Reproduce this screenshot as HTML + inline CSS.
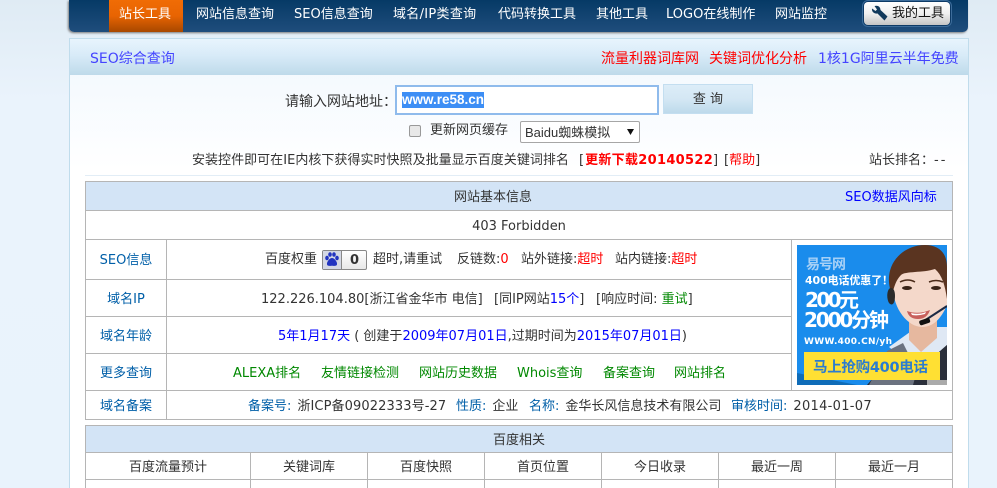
<!DOCTYPE html>
<html><head><meta charset="utf-8"><title>SEO综合查询</title>
<style>
*{box-sizing:border-box}
html,body{margin:0;padding:0;width:997px;height:488px;overflow:hidden}
#w{position:relative;width:997px;height:488px;overflow:hidden;background:linear-gradient(#dfebf4,#eaf3fc 100px,#e9f3fc);font:13px/16px "DejaVu Sans","WenQuanYi Zen Hei","Noto Sans CJK SC",sans-serif;color:#333}
.t{position:absolute;white-space:nowrap}
.c{text-align:center}
.l{position:absolute;background:#b5b5b5}
.b{color:#06c}.d{color:#005fa8}.g{color:#080}.r{color:#f00}.u{color:#00f}
.m{margin-left:3px}
#nav{position:absolute;left:69px;top:0;width:899px;height:32px;background:linear-gradient(#063a66,#1f4d7c);border-radius:0 0 5px 5px;box-shadow:-1px 1px 2px #777}
#nav .t{color:#fff;top:7px}
#on{position:absolute;left:40px;top:0;width:74px;height:32px;background:linear-gradient(#f06c05,#e86402 50%,#a84800)}
#btn{position:absolute;left:795px;top:2px;width:86px;height:23px;border-radius:4px;background:linear-gradient(#fff,#f0f0f0 50%,#c4c4c4);box-shadow:0 0 0 1px #0d3a66,0 0 0 2px #3c6c9a}
#panel{position:absolute;left:69px;top:38px;width:900px;height:460px;border:1px solid #c0dcec;background:linear-gradient(#f0f7fe,#fff 130px)}
#ph{position:absolute;left:0;top:0;width:898px;height:36px;background:linear-gradient(#e8f4fd,#d8ebf8 45%,#bedaea)}
</style></head><body><div id="w">
<div id="nav">
<div id="on"></div>
<span class="t" style="left:50px">站长工具</span>
<span class="t" style="left:127px">网站信息查询</span>
<span class="t" style="left:225px">SEO信息查询</span>
<span class="t" style="left:324px;letter-spacing:.3px">域名/IP类查询</span>
<span class="t" style="left:429px">代码转换工具</span>
<span class="t" style="left:527px">其他工具</span>
<span class="t" style="left:597px">LOGO在线制作</span>
<span class="t" style="left:706px">网站监控</span>
<div id="btn">
<svg style="position:absolute;left:7px;top:3px" width="17" height="16" viewBox="0 0 17 16"><path d="M1 3.500L4.500 6 6 4.500 3.500 1C6.500 0 9.500 1.500 9.500 5L16.500 11.500 13.500 15.500 6.500 8.500C3.500 9 .5 7 1 3.500z" fill="#123a5c"/></svg>
<span class="t" style="left:28px;top:4px;color:#111">我的工具</span>
</div>
</div>
<div id="panel">
<div id="ph"></div>
<span class="t" style="left:20px;top:12px;color:#44f;font-size:14px">SEO综合查询</span>
<span class="t" style="left:531px;top:12px;color:#f00;font-size:14px">流量利器词库网</span>
<span class="t" style="left:639px;top:12px;color:#f00;font-size:14px">关键词优化分析</span>
<span class="t" style="left:748px;top:12px;color:#44f;font-size:14px">1核1G阿里云半年免费</span>
</div>
<span class="t" style="left:285px;top:94px;font-size:14px">请输入网站地址：</span>
<div style="position:absolute;left:395px;top:85px;width:264px;height:30px;border:2px solid #8fbbec;background:#fff"></div>
<span class="t" style="left:402px;top:92px;height:16px;line-height:16px;background:#3d8ef5;color:#fff;font-weight:bold;font-family:'Liberation Sans',sans-serif;font-size:13.500px">www.re58.cn</span>
<div class="t c" style="left:663px;top:84px;width:90px;height:30px;line-height:29px;background:linear-gradient(#dcedf8,#d4e7f4 50%,#bddaeb);border:1px solid #c3def0">查 询</div>
<div style="position:absolute;left:409px;top:125px;width:12px;height:12px;border:1px solid #999;border-radius:2px;background:#e8e8e8"></div>
<span class="t" style="left:430px;top:123px">更新网页缓存</span>
<div style="position:absolute;left:520px;top:121px;width:120px;height:22px;border:1px solid #a6a6a6;border-radius:2px;background:#fff"></div>
<span class="t" style="left:525px;top:125px;font-family:'Liberation Sans','WenQuanYi Zen Hei',sans-serif">Baidu蜘蛛模拟</span>
<svg style="position:absolute;left:627px;top:129px" width="7" height="6"><path d="M0 0h7L3.500 6z" fill="#111"/></svg>
<span class="t" style="left:192px;top:153px;letter-spacing:.03px">安装控件即可在IE内核下获得实时快照及批量显示百度关键词排名</span>
<span class="t" style="left:579px;top:153px">[<b class="r" style="margin-left:1px;letter-spacing:.3px">更新下载20140522</b>]</span>
<span class="t" style="left:724px;top:153px">[<span class="r">帮助</span>]</span>
<span class="t" style="left:869px;top:153px">站长排名：<span style="letter-spacing:2px">--</span></span>
<div style="position:absolute;left:85px;top:175px;width:868px;height:1px;background:#e2edf6"></div>

<div style="position:absolute;left:85px;top:181px;width:868px;height:239px;background:#fff;border:1px solid #b5b5b5"></div>
<div style="position:absolute;left:86px;top:182px;width:866px;height:28px;background:#d3e4f6"></div>
<div class="l" style="left:85px;top:210px;width:868px;height:1px"></div>
<div class="l" style="left:85px;top:239px;width:868px;height:1px"></div>
<div class="l" style="left:85px;top:279px;width:706px;height:1px"></div>
<div class="l" style="left:85px;top:316px;width:706px;height:1px"></div>
<div class="l" style="left:85px;top:353px;width:706px;height:1px"></div>
<div class="l" style="left:85px;top:390px;width:868px;height:1px"></div>
<div class="l" style="left:166px;top:239px;width:1px;height:180px"></div>
<div class="l" style="left:791px;top:239px;width:1px;height:151px"></div>

<span class="t" style="left:454px;top:190px">网站基本信息</span>
<span class="t u" style="left:845px;top:190px">SEO数据风向标</span>
<span class="t c" style="left:85px;top:219px;width:868px">403 Forbidden</span>

<span class="t c d" style="left:86px;top:253px;width:80px">SEO信息</span>
<span class="t c d" style="left:86px;top:292px;width:80px">域名IP</span>
<span class="t c d" style="left:86px;top:329px;width:80px">域名年龄</span>
<span class="t c d" style="left:86px;top:366px;width:80px">更多查询</span>
<span class="t c d" style="left:86px;top:399px;width:80px">域名备案</span>

<span class="t" style="left:265px;top:252px">百度权重</span>
<div style="position:absolute;left:322px;top:250px;width:45px;height:20px;border:1px solid #888;border-radius:2px;background:linear-gradient(#fff,#e8e8e8)"></div>
<div style="position:absolute;left:323px;top:251px;width:19px;height:18px;background:#d4d8e4;border-right:1px solid #888"></div>
<svg style="position:absolute;left:324px;top:252px" width="16" height="15" viewBox="0 0 16 15" fill="#2234c0"><ellipse cx="3" cy="6" rx="1.800" ry="2.300"/><ellipse cx="6" cy="2.500" rx="1.800" ry="2.300"/><ellipse cx="10" cy="2.500" rx="1.800" ry="2.300"/><ellipse cx="13" cy="6" rx="1.800" ry="2.300"/><path d="M8 6c2.500 0 5.500 4 5 6.500-.5 2-3.500 1.200-5 1.200s-4.500.8-5-1.200C2.500 10 5.500 6 8 6z"/></svg>
<b class="t" style="left:350px;top:253px;color:#333">0</b>
<span class="t" style="left:373px;top:252px">超时,请重试</span>
<span class="t" style="left:457px;top:252px">反链数:<span class="r">0</span></span>
<span class="t" style="left:521px;top:252px">站外链接:<span class="r">超时</span></span>
<span class="t" style="left:615px;top:252px">站内链接:<span class="r">超时</span></span>

<span class="t" style="left:261px;top:292px">122.226.104.80[浙江省金华市 电信]</span>
<span class="t" style="left:494px;top:292px">[同IP网站<span class="u">15个</span>]</span>
<span class="t" style="left:596px;top:292px">[响应时间: <span class="g">重试</span>]</span>

<span class="t" style="left:278px;top:329px"><span class="u">5年1月17天</span> ( 创建于<span class="u">2009年07月01日</span>,过期时间为<span class="u">2015年07月01日</span>)</span>

<span class="t g" style="left:233px;top:366px">ALEXA排名</span>
<span class="t g" style="left:321px;top:366px">友情链接检测</span>
<span class="t g" style="left:419px;top:366px">网站历史数据</span>
<span class="t g" style="left:517px;top:366px">Whois查询</span>
<span class="t g" style="left:603px;top:366px">备案查询</span>
<span class="t g" style="left:674px;top:366px">网站排名</span>

<span class="t" style="left:248px;top:399px"><span class="d">备案号:</span><span class="m" style="margin-left:6px;letter-spacing:.1px">浙ICP备09022333号-27</span></span>
<span class="t" style="left:456px;top:399px"><span class="d">性质:</span><span class="m" style="margin-left:6px">企业</span></span>
<span class="t" style="left:529px;top:399px"><span class="d">名称:</span><span class="m" style="margin-left:6px">金华长风信息技术有限公司</span></span>
<span class="t" style="left:731px;top:399px"><span class="d">审核时间:</span><span class="m" style="margin-left:6px;letter-spacing:.3px">2014-01-07</span></span>

<svg style="position:absolute;left:797px;top:245px" width="150" height="140" viewBox="0 0 150 140">
<rect width="150" height="140" fill="#1a8cec"/>
<path d="M0 128L60 140H0z" fill="#0f6cb8"/>
<path d="M70 140l30-35 50-15v50z" fill="#2a2f3c"/>
<path d="M92 102l28-20 30 0v18l-30 26z" fill="#dfe8f4"/>
<path d="M90 106l16-8 14 28-4 14H72z" fill="#6b7280"/>
<path d="M125 122l25-22v40h-25z" fill="#2b2f3a"/>
<rect x="130" y="135" width="20" height="5" fill="#aaa"/>
<path d="M112 75h28v18l-16 14-12-12z" fill="#e6b89f"/>
<path d="M96 42C96 15 112 8 128 8c14 0 22 14 22 28v24c-6 14-14 22-25 22-14 0-29-18-29-40z" fill="#f4d8ca"/>
<path d="M95 50C84 22 104 0 128 0c14 0 22 8 22 22v32c-2-14-5-24-12-30-12 4-30 2-34 6-5 5-7 12-9 20z" fill="#5a3420"/>
<path d="M103 37q8-4 15 0M132 37q7-3 14 0" stroke="#4a2a18" fill="none" stroke-width="1.500"/>
<ellipse cx="110" cy="43" rx="5" ry="2" fill="#3a2418"/><ellipse cx="139" cy="43" rx="5" ry="2" fill="#3a2418"/>
<path d="M110 66q11 4 23-1q-3 9-12 9t-11-8z" fill="#c8605c"/>
<path d="M114 68q8 2 15-1l-1 2q-7 2-13 1z" fill="#fff"/>
<path d="M94 43c-4 0-5 10-2 15 4 4 6-1 6-7s-2-8-4-8z" fill="#2b2b2b"/>
<path d="M127 76l23-15" stroke="#1c2a44" stroke-width="2"/>
<rect x="122" y="74" width="11" height="5" rx="2" fill="#111" transform="rotate(-18 128 76)"/>
<g font-family="DejaVu Sans,'WenQuanYi Zen Hei','Noto Sans CJK SC',sans-serif" font-weight="bold" fill="#fff">
<text x="9" y="24" font-size="14" textLength="40" fill="#a6d0f6">易号网</text>
<text x="8" y="39" font-size="11" textLength="88">400电话优惠了！</text>
<text x="8" y="62" font-size="20" textLength="54">200元</text>
<text x="7" y="82" font-size="20" textLength="85">2000分钟</text>
<text x="7" y="99" font-size="9" textLength="88">WWW.400.CN/yh</text>
</g>
<rect x="7" y="107" width="136" height="28" fill="#ffe033"/>
<text x="16" y="127" font-family="DejaVu Sans,'WenQuanYi Zen Hei','Noto Sans CJK SC',sans-serif" font-weight="bold" font-size="14.500" textLength="115" fill="#2b7cd0">马上抢购400电话</text>
</svg>

<div style="position:absolute;left:85px;top:425px;width:868px;height:70px;background:#fff;border:1px solid #b5b5b5"></div>
<div style="position:absolute;left:86px;top:426px;width:866px;height:26px;background:#d3e4f6"></div>
<div class="l" style="left:85px;top:452px;width:868px;height:1px"></div>
<div class="l" style="left:85px;top:479px;width:868px;height:1px"></div>
<div class="l" style="left:250px;top:452px;width:1px;height:40px"></div>
<div class="l" style="left:367px;top:452px;width:1px;height:40px"></div>
<div class="l" style="left:484px;top:452px;width:1px;height:40px"></div>
<div class="l" style="left:601px;top:452px;width:1px;height:40px"></div>
<div class="l" style="left:718px;top:452px;width:1px;height:40px"></div>
<div class="l" style="left:835px;top:452px;width:1px;height:40px"></div>
<span class="t c" style="left:85px;top:433px;width:868px">百度相关</span>
<span class="t c" style="left:86px;top:460px;width:164px">百度流量预计</span>
<span class="t c" style="left:251px;top:460px;width:116px">关键词库</span>
<span class="t c" style="left:368px;top:460px;width:116px">百度快照</span>
<span class="t c" style="left:485px;top:460px;width:116px">首页位置</span>
<span class="t c" style="left:602px;top:460px;width:116px">今日收录</span>
<span class="t c" style="left:719px;top:460px;width:116px">最近一周</span>
<span class="t c" style="left:836px;top:460px;width:116px">最近一月</span>
</div></body></html>
